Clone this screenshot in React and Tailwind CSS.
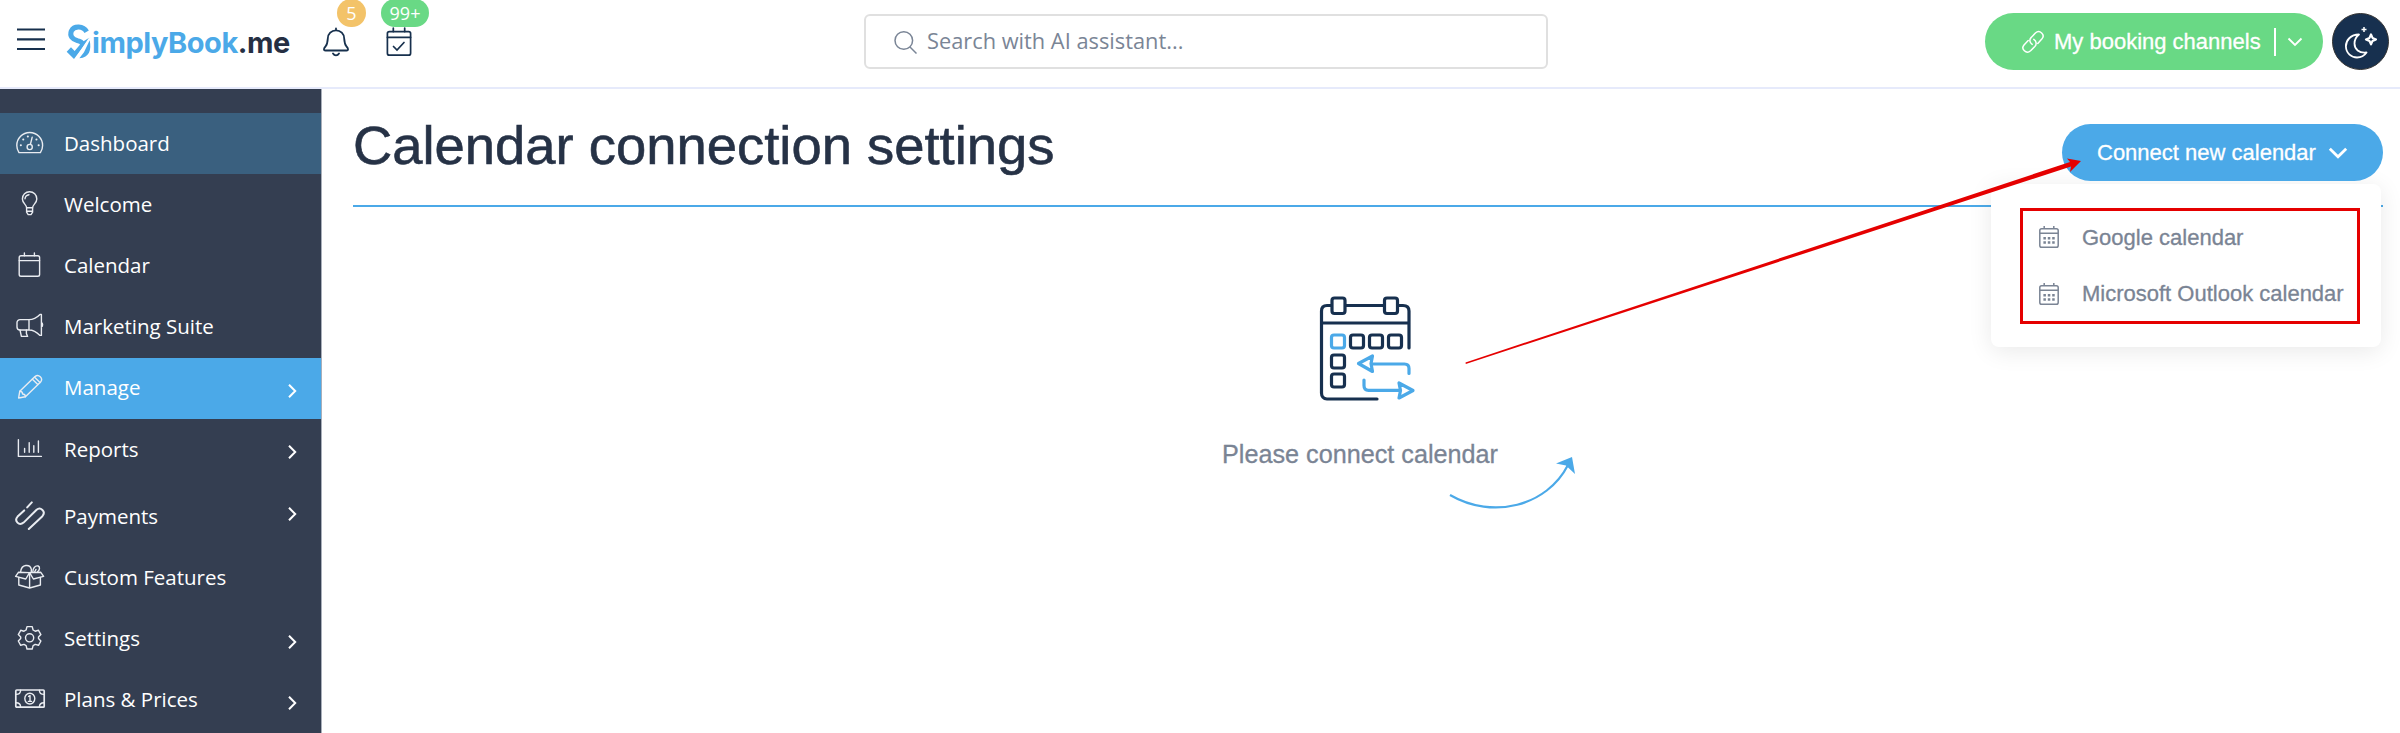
import React from "react";

// Line icons for the sidebar, all on a 32x32 grid
const icons = {
  dashboard: (
    <>
      <path d="M5 24.6C3.5 22.4 2.8 20 2.8 17.4A12.9 12.9 0 0 1 28.6 17.4C28.6 20 27.9 22.4 26.4 24.6Z" />
      <circle cx="15.7" cy="19" r="2.6" />
      <path d="M16.4 16.4L18.2 9.2" />
      <path
        strokeWidth="2"
        d="M6.8 17.2h.1M9.2 11.4h.1M13.8 8.6h.1M22.4 11.4h.1M24.6 17.2h.1"
      />
    </>
  ),
  welcome: (
    <>
      <path d="M12.6 18.8C12.6 15.6 8.4 14.4 8.4 9.9A7.2 7.2 0 0 1 22.8 9.9C22.8 14.4 18.6 15.6 18.6 18.8Z" />
      <path d="M12.6 18.8v4.4l1.6 2.4h2.8l1.6-2.4v-4.4M12.6 22.2h6M11 9.8C11.2 7.6 12.9 6 15 5.7" />
    </>
  ),
  calendar: (
    <>
      <rect x="5.2" y="5.8" width="20.4" height="20.4" rx="1.8" />
      <path d="M5.2 10.6h20.4M10.4 5.8V3M20.4 5.8V3" />
    </>
  ),
  marketing: (
    <>
      <path d="M15 8.6C19.6 8.6 23.6 5.8 26 3.4H27.4V24.4H26C23.6 22 19.6 19 15 19H6A3 3 0 0 1 3 16V11.6A3 3 0 0 1 6 8.6ZM15 8.6V19M27.4 11.8c1.6.2 1.6 3.8 0 4" />
      <path d="M6 19L7.4 25.4H13.6L12.4 22.4V19" />
    </>
  ),
  manage: (
    <>
      <path d="M4.6 26L5.8 19.2L21 4.6C24.6 1.6 29.6 6.4 26.6 10L11.4 24.8Z" />
      <path d="M18.4 7.2L23.8 12.6M20.6 5.2L26 10.6M5.8 19.2C8.4 19.2 8.6 20.4 8.6 22C10.4 22 11.4 22.6 11.4 24.8" />
    </>
  ),
  reports: <path d="M4.4 5.6V22.4H27.4M10.6 18.2V14.4M15.2 18.2V8.6M19.8 18.2V11.8M24.4 18.2V7" />,
  payments: (
    <path
      strokeWidth="2"
      d="M13.2 9.4L17.8 4.4M10.2 12.4L3.6 18.6C-.2 22.8 5 28.4 9.6 24.6L22.6 11.8C26.4 8.6 32.4 13.2 28.4 18.2L14.8 31"
    />
  ),
  features: (
    <>
      <path d="M15.6 10.6L4.6 10.2L1.6 14.4L11.8 17L15.6 10.6L19.4 17L29.6 14.4L26.6 10.2Z" />
      <path d="M4.8 15.4V23L15.6 26L26.4 23V15.4M15.6 10.6V26" />
      <path d="M6.6 10C7.4 1.8 16 1.8 17.4 7.4L17.2 10.4M18.8 10C18.8 6.8 20.8 3.2 24.2 4C26.4 4.8 25.6 8 23.6 9.8M20.6 10L22 7.4" />
    </>
  ),
  settings: (
    <>
      <circle cx="15.6" cy="14.8" r="4.1" />
      <path d="M13 3.6h5.2l.9 3.4 2.1 1.2 3.3-.9 2.4 4.3-2.4 2.4v1.6l2.4 2.4-2.4 4.3-3.3-.9-2.1 1.2-.9 3.4H13l-.9-3.4-2.1-1.2-3.3.9L4.3 18l2.4-2.4V14L4.3 11.6l2.4-4.3 3.3.9L12.1 7Z" />
    </>
  ),
  plans: (
    <>
      <rect x="1.8" y="6" width="28.4" height="17.2" rx="1" strokeWidth="1.7" />
      <ellipse cx="15.8" cy="14.6" rx="5" ry="5.4" />
      <path d="M14.6 12.4L16 11.6V17.4M14.4 17.4h3.2" />
      <path d="M2 10.4C4.8 10.4 6.6 8.8 6.6 6.2M30 10.4C27.2 10.4 25.4 8.8 25.4 6.2M2 18.8C4.8 18.8 6.6 20.4 6.6 23M30 18.8C27.2 18.8 25.4 20.4 25.4 23" />
    </>
  ),
};

const menu = [
  { id: "dashboard", label: "Dashboard", bg: "bg-[#3a607f]" },
  { id: "welcome", label: "Welcome" },
  { id: "calendar", label: "Calendar" },
  { id: "marketing", label: "Marketing Suite" },
  { id: "manage", label: "Manage", arrow: true, bg: "bg-[#4ba9e8]" },
  { id: "reports", label: "Reports", arrow: true },
  { id: "payments", label: "Payments", arrow: true, tall: true },
  { id: "features", label: "Custom Features" },
  { id: "settings", label: "Settings", arrow: true },
  { id: "plans", label: "Plans & Prices", arrow: true },
];

const MenuItem = ({ item }) => (
  <li
    className={`flex shrink-0 items-center pl-[14px] pr-6 ${item.tall ? "h-[67.4px]" : "h-[61.2px]"} ${item.bg || ""}`}
  >
    <svg
      className="h-8 w-8 shrink-0"
      viewBox="0 0 32 32"
      fill="none"
      stroke="#e9ecf1"
      strokeWidth="1.4"
      strokeLinecap="round"
      strokeLinejoin="round"
    >
      {icons[item.id]}
    </svg>
    <span className={`ml-[18px] flex-1 text-[20.5px] leading-7 ${item.tall ? "pt-1" : "pb-[2px]"}`}>
      {item.label}
    </span>
    {item.arrow && (
      <svg
        className={`h-4 w-[9px] ${item.tall ? "" : "mt-[5px]"}`}
        viewBox="0 0 9 16"
        fill="none"
        stroke="#fff"
        strokeWidth="2"
      >
        <path d="M1 1.8L7.2 8L1 14.2" />
      </svg>
    )}
  </li>
);

const Logo = () => (
  <div className="ml-[21px] flex h-[50px] w-[226px] items-center whitespace-nowrap">
    <svg className="h-9 w-[26px] shrink-0" viewBox="18 27 78 108">
      <path
        d="M80 50C70 32 42 31 34 48C28 64 38 73 52 77C62 79 66 82 68 87"
        fill="none"
        stroke="#4ba9e8"
        strokeWidth="15"
      />
      <path fill="#4ba9e8" d="M33 97L20 110L42 132L91 66L66 82L44 108Z" />
      <path fill="#4ba9e8" d="M89 76C95 104 88 129 58 130L72 112Z" />
      <path d="M94 60L50 128" stroke="#fff" strokeWidth="3.5" />
    </svg>
    <span className="mt-[2px] font-['Inter'] text-[29px] font-bold leading-9 tracking-[-0.45px] text-[#4ba9e8]">
      implyBook<span className="text-[#252f43]">.me</span>
    </span>
  </div>
);

const Header = () => (
  <header className="flex h-[89px] shrink-0 items-start border-b-2 border-[#e6eafb] bg-white">
    <svg className="ml-[17px] mt-[27px] h-6 w-7" viewBox="0 0 28 24" stroke="#17304d" strokeWidth="2.2">
      <path d="M0 2.5H28M0 12.3H28M0 22H28" />
    </svg>
    <div className="mt-[17px]">
      <Logo />
    </div>
    <div className="relative ml-[31px] mt-[27px] h-[30px] w-[26px]">
      <svg className="h-[30px] w-[26px]" viewBox="0 0 26 30" fill="none" stroke="#17304d" strokeWidth="1.8" strokeLinecap="round">
        <path d="M13 3V1.5M2.5 23.5C0 23.5 1 21 2.5 19.5C4.5 17 4.6 15 4.8 11.5A8.2 8.2 0 0 1 21.2 11.5C21.4 15 21.5 17 23.5 19.5C25 21 26 23.5 23.5 23.5ZM10 26.5C11.5 29 14.5 29 16 26.5" />
      </svg>
      <span className="absolute -top-[28px] left-[14px] h-[28px] w-[29px] rounded-full bg-[#f3c369] text-center text-[18px] font-medium leading-[28px] text-white">
        5
      </span>
    </div>
    <div className="relative ml-[37px] mt-[27px] h-[30px] w-[26px]">
      <svg className="h-[30px] w-[26px]" viewBox="0 0 26 30" fill="none" stroke="#17304d" strokeWidth="1.7" strokeLinecap="round">
        <rect x="1.4" y="4.6" width="23.2" height="23.6" rx="2" />
        <path d="M1.4 10.3H24.6M7.3 4.6V1M18.7 4.6V1M7.5 19.5L11 23L18 15.5" />
      </svg>
      <span className="absolute -top-[28px] -left-[5px] h-[28px] w-[48px] rounded-full bg-[#69d985] text-center text-[18px] font-medium leading-[28px] text-white">
        99+
      </span>
    </div>
    <div className="ml-[452px] mt-[14px] flex h-[55px] w-[684px] items-center rounded-md border-2 border-[#e0e0e0]">
      <svg className="ml-[27px] h-6 w-6" viewBox="0 0 24 24" fill="none" stroke="#7a8596" strokeWidth="1.5">
        <circle cx="10.8" cy="10.5" r="8.8" />
        <path d="M17 17L23.5 23.5" />
      </svg>
      <span className="ml-[10px] text-[21.8px] text-[#7a8596]">Search with AI assistant...</span>
    </div>
    <div className="ml-auto mr-[11px] mt-[13px] flex gap-[9px]">
      <button className="flex h-[57px] w-[338px] items-center rounded-full bg-[#69d985] font-['Liberation_Sans',sans-serif] text-[22px] text-white">
        <svg className="ml-[36px] h-6 w-6" viewBox="0 0 24 24" fill="none" stroke="#fff" strokeWidth="1.5" strokeLinecap="round">
          <path d="M11.2 14.4C8.4 12.6 8.2 9.4 10.2 7.4L14.4 3C18.8-.8 24.4 4.8 21 8.8L16.8 13.4" />
          <path d="M12.8 9.4C15.6 11.2 15.8 14.4 13.8 16.6L9.6 20.8C5.2 24.6-.4 19 3 15L7.2 10.6" />
        </svg>
        <span className="ml-[9px] [-webkit-text-stroke:0.3px_currentColor]">My booking channels</span>
        <span className="ml-[13px] h-7 w-[2px] bg-white" />
        <svg className="ml-[11px] h-3 w-4" viewBox="0 0 16 12" fill="none" stroke="#fff" strokeWidth="1.8">
          <path d="M1.5 2.5L8 9L14.5 2.5" />
        </svg>
      </button>
      <button className="flex h-[57px] w-[57px] items-center justify-center rounded-full border border-[#333] bg-[#17304f]">
        <svg className="mt-[2px] h-[32px] w-[32px]" viewBox="0 0 32 32" fill="none" stroke="#fff" strokeWidth="1.8" strokeLinejoin="round">
          <path d="M14 7.5C5.5 7.5.8 13.5.9 19.5C1.2 26.5 6.5 30.5 12 30.5C16.5 30.5 19.5 28.5 21.5 25.5C14 26.5 9.5 22 9.5 16.5C9.5 12.5 11.5 9.5 14 7.5Z" />
          <path strokeWidth="2.2" d="M26 7.4L27.5 10.9L31 12.4L27.5 13.9L26 17.4L24.500 13.900L21 12.400L24.500 10.900Z" />
          <path strokeWidth="1.5" d="M19 0V5M16.5 2.5H21.5" />
        </svg>
      </button>
    </div>
  </header>
);

const CalendarDotsIcon = () => (
  <svg className="h-[22px] w-5" viewBox="0 0 20 22" fill="none" stroke="#7a8494" strokeWidth="1.5">
    <rect x=".8" y="2.8" width="18.4" height="18.4" rx="1.8" />
    <path d="M.8 7.2H19.2M5.2 2.8V0M14.8 2.8V0" />
    <path strokeWidth="2.5" d="M4.4 12.2h2.5M8.8 12.2h2.5M13.2 12.2h2.5M4.4 16.4h2.5M8.8 16.4h2.5M13.2 16.4h2.5" />
  </svg>
);

const ConnectDropdown = () => (
  <div className="relative font-['Liberation_Sans',sans-serif] text-[22px] [-webkit-text-stroke:0.3px_currentColor]">
    <button className="relative z-10 flex h-[57px] w-[321px] items-center rounded-full bg-[#4ba9e8] pl-[35px] text-white">
      <span className="whitespace-nowrap">Connect new calendar</span>
      <svg className="ml-[12px] h-3 w-5" viewBox="0 0 20 12" fill="none" stroke="#fff" strokeWidth="2.8">
        <path d="M1.8 1.8L10 9.8L18.2 1.8" />
      </svg>
    </button>
    <div className="absolute right-[2px] top-[60px] h-[163px] w-[390px] rounded-lg bg-white px-[29px] py-6 shadow-[0_4px_24px_rgba(0,0,0,0.09)]">
      <ul className="flex h-[116px] w-[340px] flex-col gap-[4.5px] border-[3px] border-[#e50000] pl-4 text-[#7a8494]">
        {["Google calendar", "Microsoft Outlook calendar"].map((name) => (
          <li key={name} className="flex h-[52px] items-center gap-[23px] whitespace-nowrap">
            <CalendarDotsIcon />
            <span>{name}</span>
          </li>
        ))}
      </ul>
    </div>
  </div>
);

const EmptyState = () => (
  <div className="flex flex-col items-center">
    <svg className="mr-[3px] mt-[87px] h-[108px] w-[98px]" viewBox="0 0 98 108" fill="none" stroke="#17304f" strokeWidth="3.2" strokeLinecap="round">
      <path d="M13.5 11.5H9C5.5 11.5 3.5 13.5 3.5 17V99C3.5 102.5 5.5 105 9 105H59M27.5 11.5H65.5M80 11.5H85C89 11.5 91 13.5 91 17V54M3.5 29H91" />
      <rect x="14" y="4" width="13" height="15.5" rx="2.5" />
      <rect x="66.5" y="4" width="13" height="15.5" rx="2.5" />
      <rect x="13.5" y="41" width="13" height="13" rx="2.5" stroke="#4ba9e8" />
      <rect x="32.5" y="41" width="13" height="13" rx="2.5" />
      <rect x="51.5" y="41" width="13" height="13" rx="2.5" />
      <rect x="70.5" y="41" width="13" height="13" rx="2.5" />
      <rect x="13.5" y="61" width="13" height="13" rx="2.5" />
      <rect x="13.5" y="80" width="13" height="13" rx="2.5" />
      <g stroke="#4ba9e8" strokeLinejoin="round">
        <path d="M54 70H86.5C89.5 70 91 71.5 91 74.5V79.5M40.5 69.5L54.5 62L53 69.5L54.5 77.5Z" />
        <path d="M46 86V91.5C46 94.5 47.5 96.3 50.5 96.3H82M95 96.5L81 89L82.5 96.5L81 104Z" />
      </g>
    </svg>
    <p className="mr-[16px] mt-[36px] font-['Liberation_Sans',sans-serif] text-[25.2px] leading-8 text-[#7a8494] [-webkit-text-stroke:0.3px_currentColor]">
      Please connect calendar
    </p>
    <svg className="-mt-[14px] ml-[287px] h-[54px] w-[130px]" viewBox="0 0 130 54" fill="none" stroke="#4ba9e8" strokeWidth="2.2">
      <path d="M3 39C46 64 100 50 121 9" />
      <path fill="#4ba9e8" stroke="none" d="M125 1L109 7.5L119 9.5L128 18Z" />
    </svg>
  </div>
);

export default function App() {
  return (
    <div className="relative flex h-[733px] w-[2400px] flex-col overflow-hidden bg-white font-['Open_Sans',sans-serif]">
      <Header />
      <div className="flex min-h-0 flex-1">
        <nav className="w-[322px] shrink-0 overflow-hidden border-r border-[#a9afba] bg-[#343e51] pt-6 text-white">
          <ul className="flex flex-col">
            {menu.map((item) => (
              <MenuItem key={item.id} item={item} />
            ))}
          </ul>
        </nav>
        <main className="flex-1 pl-[31px] pr-[17px]">
          <div className="flex h-[118px] items-start justify-between border-b-2 border-[#4ba9e8]">
            <h1 className="mt-[27px] font-['Liberation_Sans',sans-serif] text-[54.4px] leading-[60px] text-[#263246] [-webkit-text-stroke:0.6px_currentColor]">
              Calendar connection settings
            </h1>
            <div className="mt-[35px]">
              <ConnectDropdown />
            </div>
          </div>
          <EmptyState />
        </main>
      </div>

      {/* Pointer arrow over the page */}
      <svg className="absolute left-[1460px] top-[150px] z-20 h-[220px] w-[630px]" viewBox="0 0 630 220" fill="#e50000">
        <path d="M5.500 212.400L610 12L607 8.500L621 11L610 22L611 16.500L5.800 214Z" />
      </svg>
    </div>
  );
}
